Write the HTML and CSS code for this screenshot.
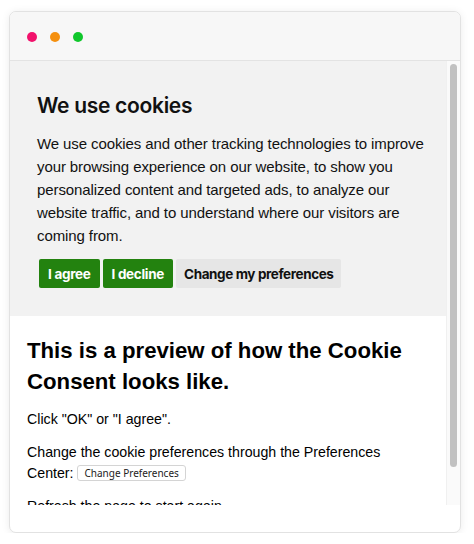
FILE: index.html
```html
<!DOCTYPE html>
<html lang="en">
<head>
    <meta charset="UTF-8">
    <meta name="viewport" content="width=device-width, initial-scale=1.0">
    <title>Cookie Consent preview</title>
    <link rel="stylesheet" href="styles.css">
</head>
<body>
    <div class="window">
        <div class="title-bar">
            <span class="dot dot-red"></span>
            <span class="dot dot-orange"></span>
            <span class="dot dot-green"></span>
        </div>

        <div class="viewport">
            <div class="page">
                <div class="cookie-banner">
                    <h2 class="banner-title">We use cookies</h2>
                    <p class="banner-text">
                        We use cookies and other tracking technologies to improve your browsing experience on our website, to show you personalized content and targeted ads, to analyze our website traffic, and to understand where our visitors are coming from.
                    </p>
                    <div class="banner-actions">
                        <button class="btn btn-primary">I agree</button>
                        <button class="btn btn-primary">I decline</button>
                        <button class="btn btn-secondary">Change my preferences</button>
                    </div>
                </div>

                <div class="preview">
                    <h1>This is a preview of how the Cookie Consent looks like.</h1>
                    <p>Click "OK" or "I agree".</p>
                    <p>Change the cookie preferences through the Preferences Center: <button class="small-btn">Change Preferences</button></p>
                    <p>Refresh the page to start again.</p>
                </div>
            </div>
            <div class="scrollbar">
                <div class="scroll-thumb"></div>
            </div>
        </div>
    </div>
</body>
</html>
```

FILE: styles.css
```css
body {
    margin: 0;
    background: #ffffff;
    font-family: "Liberation Sans", Arial, sans-serif;
}
.window {
    width: 450px;
    height: 520px;
    margin: 11px 0 0 9px;
    border: 1px solid #e2e2e2;
    border-radius: 7px;
    background: white;
    box-shadow: 0 1px 8px rgba(0,0,0,0.08);
    overflow: hidden;
    display: flex;
    flex-direction: column;
}
.title-bar {
    height: 49px;
    flex-shrink: 0;
    background: #f7f7f7;
    border-bottom: 1px solid #e3e3e3;
    display: flex;
    align-items: center;
    gap: 13px;
    padding-left: 17px;
    padding-top: 2px;
    box-sizing: border-box;
}
.dot {
    width: 10px;
    height: 10px;
    border-radius: 50%;
    display: inline-block;
}
.dot-red { background: #f2126c; }
.dot-orange { background: #f5900f; }
.dot-green { background: #10c72c; }
.viewport {
    height: 444px;
    display: flex;
    overflow: hidden;
    flex-shrink: 0;
}
.page {
    flex: 1;
    overflow: hidden;
}
.scrollbar {
    width: 14px;
    background: #fafafa;
    border-left: 1px solid #f0f0f0;
    padding: 3px 3px 0 3px;
    box-sizing: border-box;
}
.scroll-thumb {
    height: 403px;
    background: #c1c1c1;
    border-radius: 4px;
}
.cookie-banner {
    background: #f2f2f2;
    padding: 31px 18px 28px 27px;
    color: #111;
}
.banner-title {
    margin: 0 0 12px 0;
    font-family: Inter, "Noto Sans", sans-serif;
    font-size: 21px;
    font-weight: 600;
    line-height: 28px;
    letter-spacing: -0.3px;
}
.banner-text {
    margin: 0 0 12px 0;
    font-size: 15px;
    line-height: 23px;
    letter-spacing: -0.1px;
}
.banner-actions {
    display: flex;
    gap: 3px;
    padding-left: 2px;
}
.btn {
    font-family: Inter, "Noto Sans", sans-serif;
    font-size: 13.5px;
    font-weight: 700;
    height: 29px;
    padding: 0 9px;
    border: none;
    border-radius: 2px;
    letter-spacing: -0.3px;
    cursor: pointer;
}
.btn-primary {
    background: #23820f;
    color: white;
}
.btn-secondary {
    background: #e6e6e6;
    color: #111;
    padding: 0 8px;
    letter-spacing: -0.4px;
}
.preview {
    padding: 19px 17px 0 17px;
    color: #000;
}
.preview h1 {
    margin: 0 0 12px 0;
    font-size: 22.2px;
    line-height: 31px;
    font-weight: bold;
}
.preview p {
    margin: 0 0 12px 0;
    font-size: 14.2px;
    line-height: 21px;
}
.small-btn {
    font-family: "Noto Sans", sans-serif;
    font-size: 10px;
    line-height: 14px;
    background: white;
    border: 1px solid #d4d4d4;
    border-radius: 3px;
    padding: 0 6px;
    color: #222;
    vertical-align: 1px;
}
```
